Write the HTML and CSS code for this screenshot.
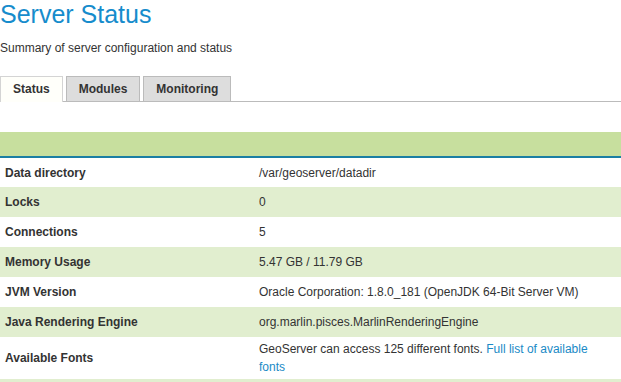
FILE: index.html
```html
<!DOCTYPE html>
<html lang="en">
<head>
  <meta charset="UTF-8">
  <title>Server Status</title>
  <link rel="stylesheet" href="styles.css">
</head>
<body>
  <h1 class="page-title">Server Status</h1>
  <p class="page-desc">Summary of server configuration and status</p>

  <ul class="tabs">
    <li class="tab active">Status</li>
    <li class="tab">Modules</li>
    <li class="tab">Monitoring</li>
  </ul>

  <table class="status-table">
    <thead>
      <tr><th colspan="2"></th></tr>
    </thead>
    <tbody>
      <tr>
        <td class="label">Data directory</td>
        <td>/var/geoserver/datadir</td>
      </tr>
      <tr>
        <td class="label">Locks</td>
        <td>0</td>
      </tr>
      <tr>
        <td class="label">Connections</td>
        <td>5</td>
      </tr>
      <tr>
        <td class="label">Memory Usage</td>
        <td>5.47 GB / 11.79 GB</td>
      </tr>
      <tr>
        <td class="label">JVM Version</td>
        <td>Oracle Corporation: 1.8.0_181 (OpenJDK 64-Bit Server VM)</td>
      </tr>
      <tr>
        <td class="label">Java Rendering Engine</td>
        <td>org.marlin.pisces.MarlinRenderingEngine</td>
      </tr>
      <tr>
        <td class="label">Available Fonts</td>
        <td>GeoServer can access 125 different fonts. <a href="#">Full list of available fonts</a></td>
      </tr>
      <tr class="next-row">
        <td class="label"></td>
        <td></td>
      </tr>
    </tbody>
  </table>
</body>
</html>
```

FILE: styles.css
```css
:root {
  --text-color: #333333;
  --link-color: #1a8ac6;
  --title-color: #168ccc;
  --tab-bg: #dddddd;
  --tab-border: #bbbbbb;
  --header-green: #c7df9e;
  --row-green: #e1eecf;
  --header-line: #1b7fa3;
}

* {
  box-sizing: border-box;
}

html {
  overflow: hidden;
}

body {
  margin: 0;
  padding: 0;
  font-family: "Liberation Sans", Arial, sans-serif;
  font-size: 12px;
  line-height: 15px;
  color: var(--text-color);
  background: #ffffff;
}

.page-title {
  margin: 0;
  font-size: 25px;
  line-height: 28px;
  font-weight: normal;
  color: var(--title-color);
}

.page-desc {
  margin: 13px 0 0;
}

/* tabs */
.tabs {
  display: flex;
  gap: 3px;
  list-style: none;
  margin: 20px 0 0;
  padding: 0;
  border-bottom: 1px solid var(--tab-border);
}

.tab {
  padding: 5px 12px 4px;
  font-weight: bold;
  background: var(--tab-bg);
  border: 1px solid var(--tab-border);
  border-bottom: none;
}

.tab.active {
  background: #fffffa;
  border-color: #d4d4d4;
  margin-bottom: -1px;
  padding-bottom: 5px;
}

/* table */
.status-table {
  width: 100%;
  margin-top: 30px;
  border-collapse: collapse;
}

.status-table th {
  height: 25px;
  padding: 0;
  background: var(--header-green);
  border-bottom: 2px solid var(--header-line);
}

.status-table td {
  height: 30px;
  padding: 3px 5px;
  line-height: 18px;
  vertical-align: middle;
  text-align: left;
}

.status-table td.label {
  width: 254px;
  font-weight: bold;
}

.status-table tbody tr:nth-child(even) {
  background: var(--row-green);
}

.status-table a {
  color: var(--link-color);
  text-decoration: none;
}
```
